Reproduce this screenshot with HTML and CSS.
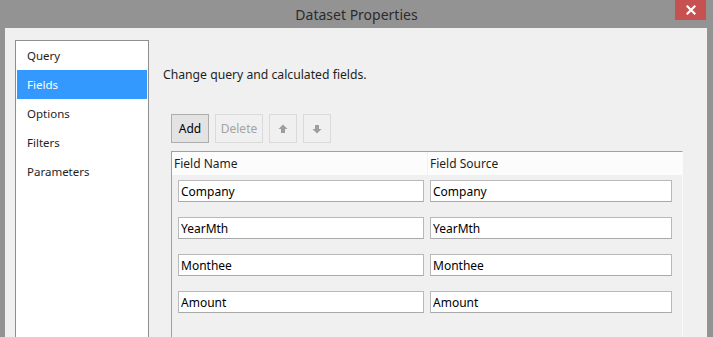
FILE: index.html
```html
<!DOCTYPE html>
<html lang="en">
<head>
    <meta charset="UTF-8">
    <title>Dataset Properties</title>
    <link rel="stylesheet" href="styles.css">
</head>
<body>
    <div class="window">
        <div class="titlebar">
            <div class="title">Dataset Properties</div>
            <div class="close-btn">
                <svg width="10" height="10" viewBox="0 0 10 10">
                    <path d="M1.5 1.5 L8.5 8.5 M8.5 1.5 L1.5 8.5" stroke="#fff" stroke-width="2.2" stroke-linecap="square"/>
                </svg>
            </div>
        </div>
        <div class="dialog">
            <ul class="nav-list">
                <li>Query</li>
                <li class="active">Fields</li>
                <li>Options</li>
                <li>Filters</li>
                <li>Parameters</li>
            </ul>
            <div class="page">
                <div class="page-title">Change query and calculated fields.</div>
                <div class="toolbar">
                    <button class="btn btn-add">Add</button>
                    <button class="btn btn-delete disabled">Delete</button>
                    <button class="btn icon-btn disabled">
                        <svg width="10" height="10" viewBox="0 0 10 10">
                            <path d="M5 0.5 L9.5 5 L7 5 L7 9 L3 9 L3 5 L0.5 5 Z" fill="#9e9e9e"/>
                        </svg>
                    </button>
                    <button class="btn icon-btn disabled">
                        <svg width="10" height="10" viewBox="0 0 10 10">
                            <path d="M5 9.5 L9.5 5 L7 5 L7 1 L3 1 L3 5 L0.5 5 Z" fill="#9e9e9e"/>
                        </svg>
                    </button>
                </div>
                <div class="fields-grid">
                    <div class="grid-header">
                        <div class="col-name">Field Name</div>
                        <div class="col-source">Field Source</div>
                    </div>
                    <div class="grid-body" id="gridBody"></div>
                </div>
            </div>
        </div>
    </div>

    <script>
        const fields = [
            { name: 'Company', source: 'Company' },
            { name: 'YearMth', source: 'YearMth' },
            { name: 'Monthee', source: 'Monthee' },
            { name: 'Amount', source: 'Amount' }
        ];
        document.getElementById('gridBody').innerHTML = fields.map(f => `
            <div class="grid-row">
                <div class="col-name"><input type="text" class="field-input" value="${f.name}"></div>
                <div class="col-source"><input type="text" class="field-input" value="${f.source}"></div>
            </div>
        `).join('');
    </script>
</body>
</html>
```

FILE: styles.css
```css
html, body {
    margin: 0;
    padding: 0;
    height: 100%;
    overflow: hidden;
}
body {
    font-family: "Noto Sans", "Open Sans", sans-serif;
    background-color: #939393;
}
.window {
    height: 100%;
    display: flex;
    flex-direction: column;
}
.titlebar {
    position: relative;
    flex-shrink: 0;
    height: 28px;
    display: flex;
    align-items: center;
    justify-content: center;
}
.title {
    font-size: 14px;
    color: #2b2b2b;
    margin-top: 1px;
}
.close-btn {
    position: absolute;
    top: 0;
    right: 7px;
    width: 31px;
    height: 20px;
    background-color: #c75050;
    display: flex;
    align-items: center;
    justify-content: center;
}
.dialog {
    flex: 1;
    min-height: 0;
    margin: 0 6px 0 5px;
    background-color: #f0f0f0;
    display: flex;
    padding: 12px 0 0 10px;
}
.nav-list {
    list-style: none;
    margin: 0;
    padding: 0 1px;
    width: 130px;
    background: white;
    border: 1px solid #8e8f91;
    border-bottom: none;
    font-size: 11.5px;
    color: #1e1e1e;
}
.nav-list li {
    height: 29px;
    line-height: 29px;
    padding-left: 10px;
}
.nav-list li.active {
    background-color: #3399ff;
    color: white;
}
.page {
    flex: 1;
    padding-left: 22px;
}
.page-title {
    font-size: 12.2px;
    color: #1e1e1e;
    margin: 25px 0 0 -8px;
    line-height: 19px;
}
.toolbar {
    display: flex;
    gap: 6px;
    margin-top: 30px;
}
.btn {
    height: 29px;
    padding: 0;
    font-family: inherit;
    font-size: 12px;
    color: #000;
    background-color: #e3e3e3;
    border: 1px solid #adadad;
    margin: 0;
}
.btn-add {
    width: 38px;
}
.btn-delete {
    width: 48px;
}
.btn.disabled {
    color: #a3a3a3;
    background-color: #f0f0f0;
    border-color: #dadada;
}
.icon-btn {
    width: 28px;
    display: flex;
    align-items: center;
    justify-content: center;
}
.fields-grid {
    margin-top: 8px;
    width: 510px;
    border-top: 1px solid #a0a0a0;
    border-left: 1px solid #a0a0a0;
    border-right: 1px solid #fafafa;
    height: 200px;
    font-size: 12px;
    color: #1e1e1e;
}
.grid-header {
    display: flex;
    height: 23px;
    line-height: 23px;
    background-color: #fcfcfc;
}
.grid-header .col-name {
    width: 253px;
    padding-left: 2px;
    border-right: 1px solid #f0f0f0;
}
.grid-header .col-source {
    padding-left: 2px;
}
.grid-body {
    padding-top: 5px;
    display: flex;
    flex-direction: column;
    gap: 15px;
}
.grid-row {
    display: flex;
    height: 22px;
}
.grid-row .col-name {
    width: 250px;
    padding-left: 6px;
}
.grid-row .col-source {
    padding-left: 2px;
}
.field-input {
    box-sizing: border-box;
    height: 22px;
    width: 246px;
    margin: 0;
    padding: 0 2px;
    font-family: inherit;
    font-size: 12px;
    color: #000;
    border: 1px solid #b9b9b9;
    border-bottom-color: #a9a9a9;
    background: white;
    outline: none;
}
.grid-row .col-source .field-input {
    width: 242px;
}
```
